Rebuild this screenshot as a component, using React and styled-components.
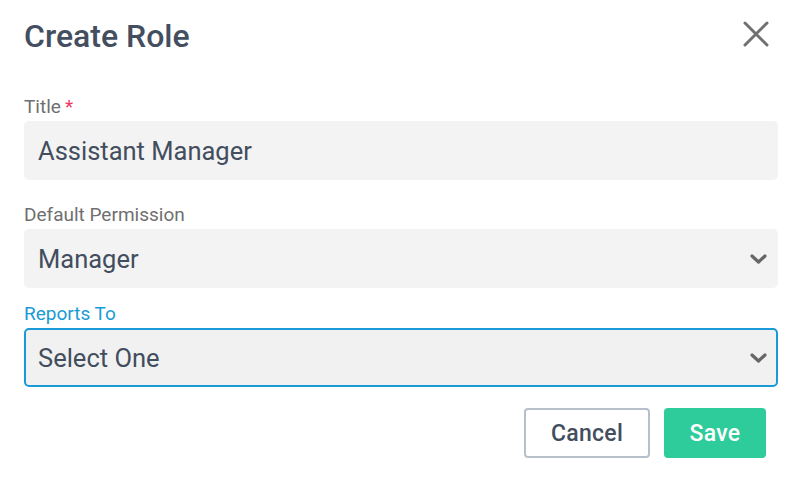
import styled, { createGlobalStyle } from 'styled-components'

const GlobalStyle = createGlobalStyle`
    html, body {
        margin: 0;
        padding: 0;
        background: #fff;
        font-family: Roboto, "Liberation Sans", sans-serif;
    }
`

const Modal = styled.div`
    width: 796px;
    height: 498px;
    box-sizing: border-box;
    padding: 18px 18px 0 24px;
    display: flex;
    flex-direction: column;
    background: #fff;
`

const Header = styled.div`
    display: flex;
    justify-content: space-between;
    align-items: flex-start;
    height: 37px;
`

const Heading = styled.h2`
    margin: 0;
    font-size: 32px;
    line-height: 36px;
    font-weight: 500;
    color: #434e5f;
`

const CloseButton = styled.button`
    border: none;
    background: none;
    padding: 0;
    margin: 3px 9px 0 0;
    width: 26px;
    height: 26px;
    cursor: pointer;
    display: flex;
`

const Field = styled.div`
    display: flex;
    flex-direction: column;
    gap: 2px;
    margin-top: ${props => props.$top}px;
`

const Label = styled.label`
    font-size: 19px;
    line-height: 24px;
    color: ${props => props.$focused ? '#1a9ad6' : '#6f6f6f'};
`

const Required = styled.span`
    color: #ee3a62;
    margin-left: 4px;
    font-size: 19px;
`

const InputBox = styled.div`
    position: relative;
    height: 59px;
    box-sizing: border-box;
    display: flex;
    align-items: center;
    padding: 0 12px;
    border-radius: 5px;
    background: ${props => props.$focused ? '#f1f1f1' : '#f3f3f3'};
    border: 2px solid ${props => props.$focused ? '#1a9ad6' : 'transparent'};
    font-size: 25.5px;
    color: #424d5d;
`

const Chevron = styled.svg`
    position: absolute;
    right: 9px;
    top: 50%;
    margin-top: -5px;
`

const Actions = styled.div`
    display: flex;
    justify-content: flex-end;
    gap: 14px;
    margin: 21px 12px 0 0;
`

const Button = styled.button`
    height: 50px;
    box-sizing: border-box;
    border-radius: 4px;
    font-family: Roboto, "Liberation Sans", sans-serif;
    font-size: 23px;
    font-weight: 500;
    letter-spacing: 0.3px;
    cursor: pointer;
`

const CancelButton = styled(Button)`
    width: 126px;
    background: #fff;
    border: 2px solid #b7bfca;
    color: #434e5f;
`

const SaveButton = styled(Button)`
    width: 102px;
    background: #2fcc9b;
    border: none;
    color: #fff;
`

const ChevronIcon = () => (
    <Chevron width="17" height="10" viewBox="0 0 17 10">
        <polyline points="2,2 8.5,8 15,2" fill="none" stroke="#666" strokeWidth="3.2" strokeLinecap="round" strokeLinejoin="round" />
    </Chevron>
)

export default function App() {
    return (
        <Modal>
            <GlobalStyle />
            <Header>
                <Heading>Create Role</Heading>
                <CloseButton aria-label="Close">
                    <svg width="26" height="26" viewBox="0 0 26 26">
                        <path d="M2 2 L24 24 M24 2 L2 24" stroke="#717171" strokeWidth="3" strokeLinecap="round" />
                    </svg>
                </CloseButton>
            </Header>
            <Field $top={40}>
                <Label>Title<Required>*</Required></Label>
                <InputBox>Assistant Manager</InputBox>
            </Field>
            <Field $top={23}>
                <Label>Default Permission</Label>
                <InputBox>
                    Manager
                    <ChevronIcon />
                </InputBox>
            </Field>
            <Field $top={14}>
                <Label $focused>Reports To</Label>
                <InputBox $focused>
                    Select One
                    <ChevronIcon />
                </InputBox>
            </Field>
            <Actions>
                <CancelButton>Cancel</CancelButton>
                <SaveButton>Save</SaveButton>
            </Actions>
        </Modal>
    )
}
